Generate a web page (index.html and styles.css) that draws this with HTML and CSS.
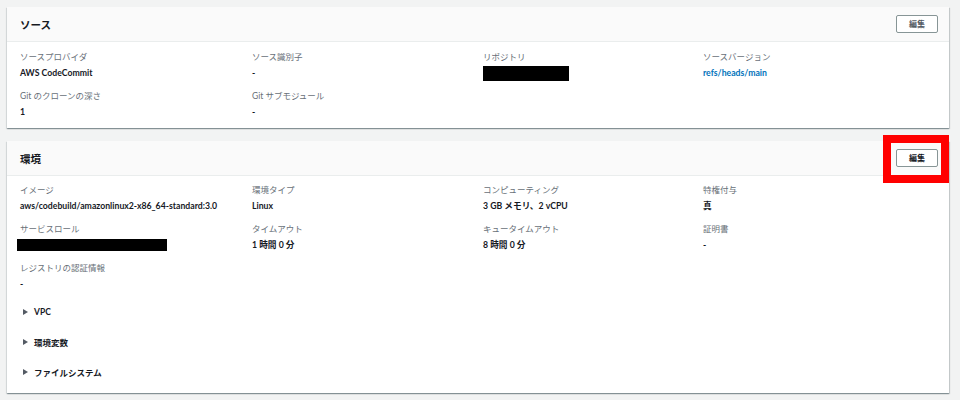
FILE: index.html
```html
<!DOCTYPE html>
<html lang="ja">
<head>
<meta charset="utf-8">
<link rel="stylesheet" href="styles.css">
</head>
<body>
<div class="page">
  <section class="card">
    <header class="card-head">
      <h2 class="title">ソース</h2>
      <button class="btn">編集</button>
    </header>
    <div class="card-body">
      <div class="grid">
        <div class="field"><div class="label">ソースプロバイダ</div><div class="value">AWS CodeCommit</div></div>
        <div class="field"><div class="label">ソース識別子</div><div class="value">-</div></div>
        <div class="field"><div class="label">リポジトリ</div><div class="value"><span class="redact repo"></span></div></div>
        <div class="field"><div class="label">ソースバージョン</div><div class="value"><a class="link" href="#">refs/heads/main</a></div></div>
        <div class="field"><div class="label">Git のクローンの深さ</div><div class="value">1</div></div>
        <div class="field"><div class="label">Git サブモジュール</div><div class="value">-</div></div>
      </div>
    </div>
  </section>

  <section class="card env">
    <div class="highlight"></div>
    <header class="card-head">
      <h2 class="title">環境</h2>
      <button class="btn">編集</button>
    </header>
    <div class="card-body env-body">
      <div class="grid">
        <div class="field"><div class="label">イメージ</div><div class="value">aws/codebuild/amazonlinux2-x86_64-standard:3.0</div></div>
        <div class="field"><div class="label">環境タイプ</div><div class="value">Linux</div></div>
        <div class="field"><div class="label">コンピューティング</div><div class="value">3 GB メモリ、2 vCPU</div></div>
        <div class="field"><div class="label">特権付与</div><div class="value">真</div></div>
        <div class="field"><div class="label">サービスロール</div><div class="value"><span class="redact role"></span></div></div>
        <div class="field"><div class="label">タイムアウト</div><div class="value">1 時間 0 分</div></div>
        <div class="field"><div class="label">キュータイムアウト</div><div class="value">8 時間 0 分</div></div>
        <div class="field"><div class="label">証明書</div><div class="value">-</div></div>
        <div class="field"><div class="label">レジストリの認証情報</div><div class="value">-</div></div>
      </div>
      <ul class="expanders">
        <li class="exp"><svg class="caret" width="5" height="6" viewBox="0 0 5 6"><polygon points="0,0 5,3 0,6" fill="#545b64"/></svg><span>VPC</span></li>
        <li class="exp"><svg class="caret" width="5" height="6" viewBox="0 0 5 6"><polygon points="0,0 5,3 0,6" fill="#545b64"/></svg><span>環境変数</span></li>
        <li class="exp"><svg class="caret" width="5" height="6" viewBox="0 0 5 6"><polygon points="0,0 5,3 0,6" fill="#545b64"/></svg><span>ファイルシステム</span></li>
      </ul>
    </div>
  </section>
</div>
</body>
</html>
```
FILE: styles.css
```css
* { box-sizing: border-box; }
html, body { margin: 0; padding: 0; }
body {
  background: #f2f3f3;
  font-family: "Lato", "Noto Sans CJK JP", sans-serif;
  color: #16191f;
  width: 960px;
  height: 400px;
  overflow: hidden;
}
.page {
  padding: 7px 11px 0 7px;
  display: flex;
  flex-direction: column;
  gap: 13px;
}
.card {
  background: #fff;
  box-shadow: 0 1px 1px 0 rgba(0, 28, 36, 0.3), 1px 1px 1px 0 rgba(0, 28, 36, 0.15), -1px 1px 1px 0 rgba(0, 28, 36, 0.08);
  position: relative;
}
.card-head {
  height: 35px;
  background: #fafafa;
  border-bottom: 1px solid #eaeded;
  display: flex;
  align-items: center;
  justify-content: space-between;
  padding: 0 11px 0 13px;
}
.title {
  margin: 0;
  font-size: 10.5px;
  font-weight: 700;
  color: #16191f;
}
.btn {
  width: 42px;
  height: 18px;
  padding: 0;
  background: #fff;
  border: 1px solid #879596;
  border-radius: 2px;
  font-family: "Lato", "Noto Sans CJK JP", sans-serif;
  font-size: 8px;
  font-weight: 700;
  color: #545b64;
  line-height: 16px;
}
.env .btn {
  color: #16191f;
}
.card-body {
  padding: 7px 13px 8px 13px;
}
.env-body {
  padding-top: 6px;
  padding-bottom: 6px;
}
.grid {
  display: grid;
  grid-template-columns: 232px 231px 220px 1fr;
  row-gap: 7px;
}
.label {
  font-size: 8.5px;
  line-height: 16px;
  color: #687078;
  white-space: nowrap;
}
.value {
  font-size: 8.7px;
  line-height: 16px;
  font-weight: 700;
  color: #16191f;
  white-space: nowrap;
  display: flex;
  align-items: center;
  height: 16px;
}
.link {
  color: #0073bb;
  text-decoration: none;
}
.redact {
  display: block;
  background: #000;
}
.repo {
  width: 86px;
  height: 15px;
  margin-top: 1px;
}
.role {
  width: 150px;
  height: 12px;
  margin-left: -3px;
}
.expanders {
  list-style: none;
  margin: 5px 0 0 0;
  padding: 0;
}
.exp {
  height: 30px;
  display: flex;
  align-items: center;
  gap: 6px;
  padding-left: 3px;
  font-size: 8.5px;
  font-weight: 700;
  color: #16191f;
}
.caret {
  display: block;
  width: 5px;
  height: 6px;
}
.highlight {
  position: absolute;
  top: -6px;
  right: 0;
  width: 66px;
  height: 48px;
  border: 8px solid #ff0000;
  z-index: 2;
}
```
